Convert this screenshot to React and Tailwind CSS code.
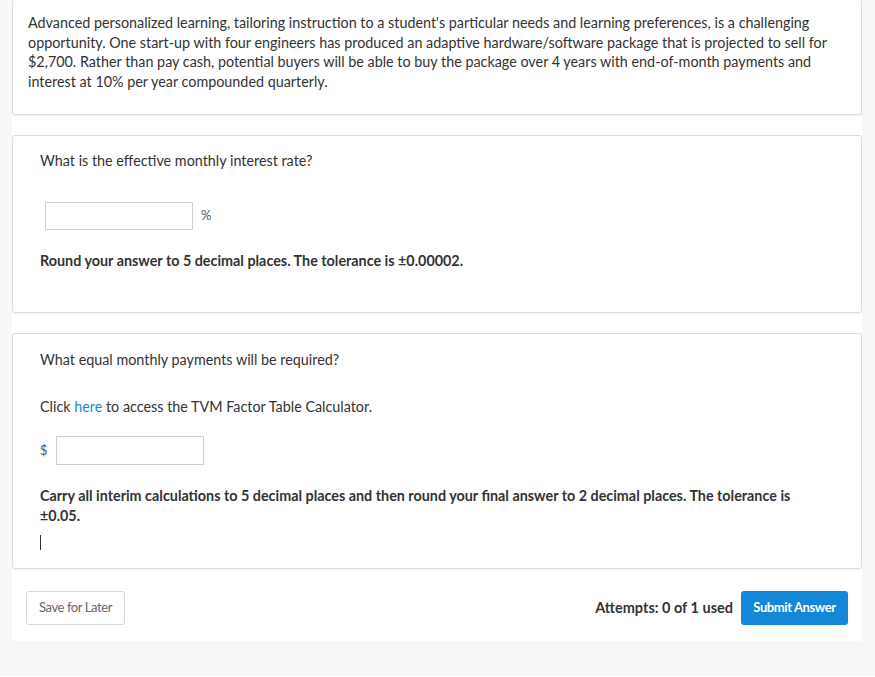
import { useState } from "react";

function Card({ className = "", children }) {
  return (
    <div
      className={
        "bg-white border border-[#dcdcdc] rounded-[3px] shadow-[0_1px_2px_rgba(0,0,0,0.06)] " +
        className
      }
    >
      {children}
    </div>
  );
}

export default function App() {
  const [rate, setRate] = useState("");
  const [payment, setPayment] = useState("");

  return (
    <div
      className="min-h-[677px] bg-[#f7f7f7] text-[14.35px] leading-[19.5px] text-[#333]"
      style={{ fontFamily: "Lato, 'Open Sans', sans-serif" }}
    >
      <div className="ml-[12px] w-[850px] bg-white">
        {/* problem statement */}
        <Card className="mt-[-1px] pl-[15px] pr-[20px] pt-[13px] pb-[23px]">
          <p>
            Advanced personalized learning, tailoring instruction to a student's
            particular needs and learning preferences, is a challenging
            opportunity. One start-up with four engineers has produced an
            adaptive hardware/software package that is projected to sell for
            $2,700. Rather than pay cash, potential buyers will be able to buy
            the package over 4 years with end-of-month payments and interest at
            10% per year compounded quarterly.
          </p>
        </Card>

        {/* part 1 */}
        <Card className="mt-[20px] h-[178px] pl-[27px] pr-[60px] pt-[15px]">
          <p>What is the effective monthly interest rate?</p>
          <div className="mt-[31px] flex items-center">
            <input
              value={rate}
              onChange={(e) => setRate(e.target.value)}
              className="ml-[5px] h-[28px] w-[148px] border border-[#cfcfcf] bg-white outline-none"
            />
            <span className="ml-[8px] text-[13px] text-[#555]">%</span>
          </div>
          <p className="mt-[21px] font-bold">
            Round your answer to 5 decimal places. The tolerance is ±0.00002.
          </p>
        </Card>

        {/* part 2 */}
        <Card className="mt-[20px] h-[236px] pl-[27px] pr-[60px] pt-[16px]">
          <p>What equal monthly payments will be required?</p>
          <p className="mt-[27px]">
            Click{" "}
            <a href="#" className="text-[#1b8bc4]">
              here
            </a>{" "}
            to access the TVM Factor Table Calculator.
          </p>
          <div className="mt-[20px] flex items-center">
            <span className="text-[13px] text-[#555]">$</span>
            <input
              value={payment}
              onChange={(e) => setPayment(e.target.value)}
              className="ml-[8px] h-[29px] w-[148px] border border-[#cfcfcf] bg-white outline-none"
            />
          </div>
          <p className="mt-[21px] font-bold">
            Carry all interim calculations to 5 decimal places and then round
            your final answer to 2 decimal places. The tolerance is ±0.05.
          </p>
          <div className="mt-[10px] h-[15px] w-[1px] bg-[#333]" />
        </Card>

        {/* footer actions */}
        <div className="flex h-[72px] items-center justify-between pl-[14px] pr-[14px] pt-[6px]">
          <button className="h-[34px] w-[99px] rounded-[3px] border border-[#d8d8d8] bg-white text-[13px] tracking-[-0.4px] text-[#666]">
            Save for Later
          </button>
          <div className="flex items-center">
            <span className="text-[14.5px] font-bold text-[#333]">
              Attempts: 0 of 1 used
            </span>
            <button className="ml-[8px] h-[34px] w-[107px] rounded-[3px] bg-[#1387d8] text-[13px] font-bold tracking-[-0.4px] text-white">
              Submit Answer
            </button>
          </div>
        </div>
      </div>
    </div>
  );
}
